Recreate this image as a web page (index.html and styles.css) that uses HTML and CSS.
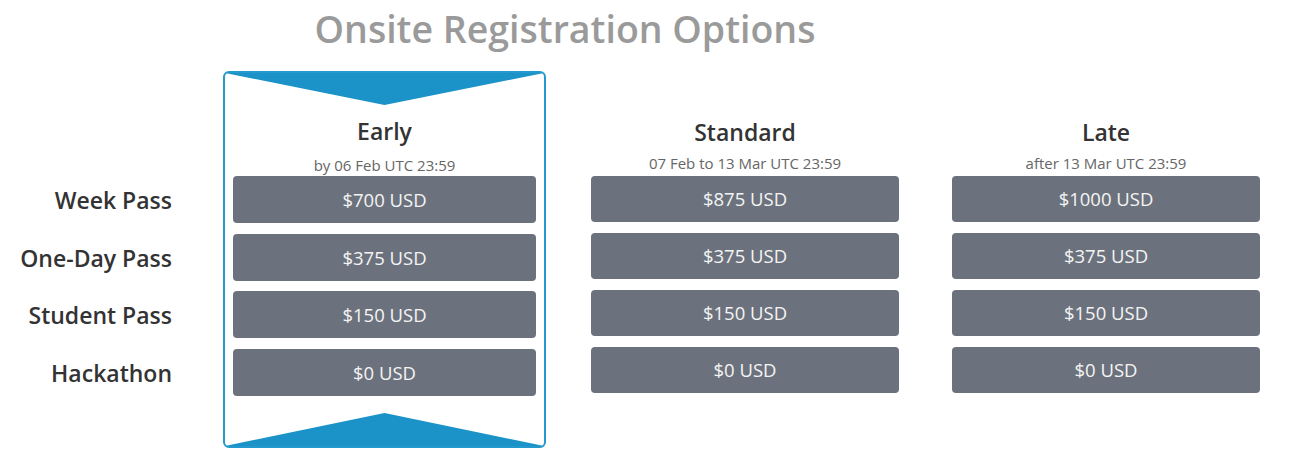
FILE: index.html
```html
<!DOCTYPE html>
<html lang="en">
<head>
<meta charset="utf-8">
<title>Onsite Registration Options</title>
<link rel="stylesheet" href="styles.css">
</head>
<body>
<h1 class="title">Onsite Registration Options</h1>
<div class="pricing">
  <div class="labels">
    <div class="label">Week Pass</div>
    <div class="label">One-Day Pass</div>
    <div class="label">Student Pass</div>
    <div class="label">Hackathon</div>
  </div>

  <div class="tier tier-active">
    <svg class="ribbon" viewBox="0 0 319 32" preserveAspectRatio="none"><polygon points="0,0 319,0 159.5,32"/></svg>
    <h2 class="tier-name">Early</h2>
    <div class="tier-date">by 06 Feb UTC 23:59</div>
    <div class="prices">
      <div class="price">$700 USD</div>
      <div class="price">$375 USD</div>
      <div class="price">$150 USD</div>
      <div class="price">$0 USD</div>
    </div>
    <div class="spacer"></div>
    <svg class="ribbon" viewBox="0 0 319 33" preserveAspectRatio="none"><polygon points="0,33 319,33 159.5,0"/></svg>
  </div>

  <div class="tier tier-standard">
    <h2 class="tier-name">Standard</h2>
    <div class="tier-date">07 Feb to 13 Mar UTC 23:59</div>
    <div class="prices">
      <div class="price">$875 USD</div>
      <div class="price">$375 USD</div>
      <div class="price">$150 USD</div>
      <div class="price">$0 USD</div>
    </div>
  </div>

  <div class="tier tier-late">
    <h2 class="tier-name">Late</h2>
    <div class="tier-date">after 13 Mar UTC 23:59</div>
    <div class="prices">
      <div class="price">$1000 USD</div>
      <div class="price">$375 USD</div>
      <div class="price">$150 USD</div>
      <div class="price">$0 USD</div>
    </div>
  </div>
</div>
</body>
</html>
```

FILE: styles.css
```css
* { box-sizing: border-box; }

body {
  margin: 0;
  background: #ffffff;
  font-family: "Open Sans", "Liberation Sans", sans-serif;
  color: #333333;
}

.title {
  width: 1130px;
  margin: 0;
  padding-top: 5px;
  height: 53px;
  text-align: center;
  font-size: 37.5px;
  line-height: 48px;
  font-weight: 600;
  color: #9a9a9a;
}

.pricing {
  display: flex;
  align-items: flex-start;
  margin-top: 18px;
}

.labels {
  width: 172px;
  padding-top: 106px;
  display: flex;
  flex-direction: column;
  gap: 10.5px;
  text-align: right;
}

.label {
  height: 47px;
  line-height: 47px;
  font-size: 23px;
  font-weight: 600;
  color: #333333;
  white-space: nowrap;
}

.tier {
  display: flex;
  flex-direction: column;
  text-align: center;
}

.tier-active {
  margin-left: 51px;
  width: 323px;
  height: 377px;
  border: 2px solid #2499cd;
  border-radius: 6px;
  overflow: hidden;
  padding: 0 8px;
}

.ribbon {
  display: block;
  width: calc(100% + 16px);
  margin: 0 -8px;
  fill: #1b93c8;
}

.ribbon:first-child { height: 32px; }
.ribbon:last-child { height: 33px; }

.tier-name {
  margin: 0;
  font-size: 23px;
  line-height: 30px;
  font-weight: 600;
  color: #333333;
}

.tier-date {
  font-size: 15px;
  line-height: 20px;
  color: #666666;
}

.tier-active .tier-name { margin-top: 11px; }
.tier-active .tier-date { margin-top: 9px; margin-bottom: 1px; }

.prices {
  display: flex;
  flex-direction: column;
  gap: 10.5px;
}

.price {
  height: 47px;
  line-height: 47px;
  border-radius: 4px;
  background: #6c727d;
  color: #f4f4f4;
  font-size: 18.5px;
}

.spacer { flex: 1; }

.tier-standard,
.tier-late {
  width: 308px;
  padding-top: 46px;
}

.tier-standard { margin-left: 45px; }
.tier-late { margin-left: 53px; }

.tier-standard .tier-date,
.tier-late .tier-date { margin-top: 6px; margin-bottom: 3px; }

.tier-standard .prices,
.tier-late .prices { gap: 11px; }

.tier-standard .price,
.tier-late .price {
  height: 46px;
  line-height: 46px;
}
```
